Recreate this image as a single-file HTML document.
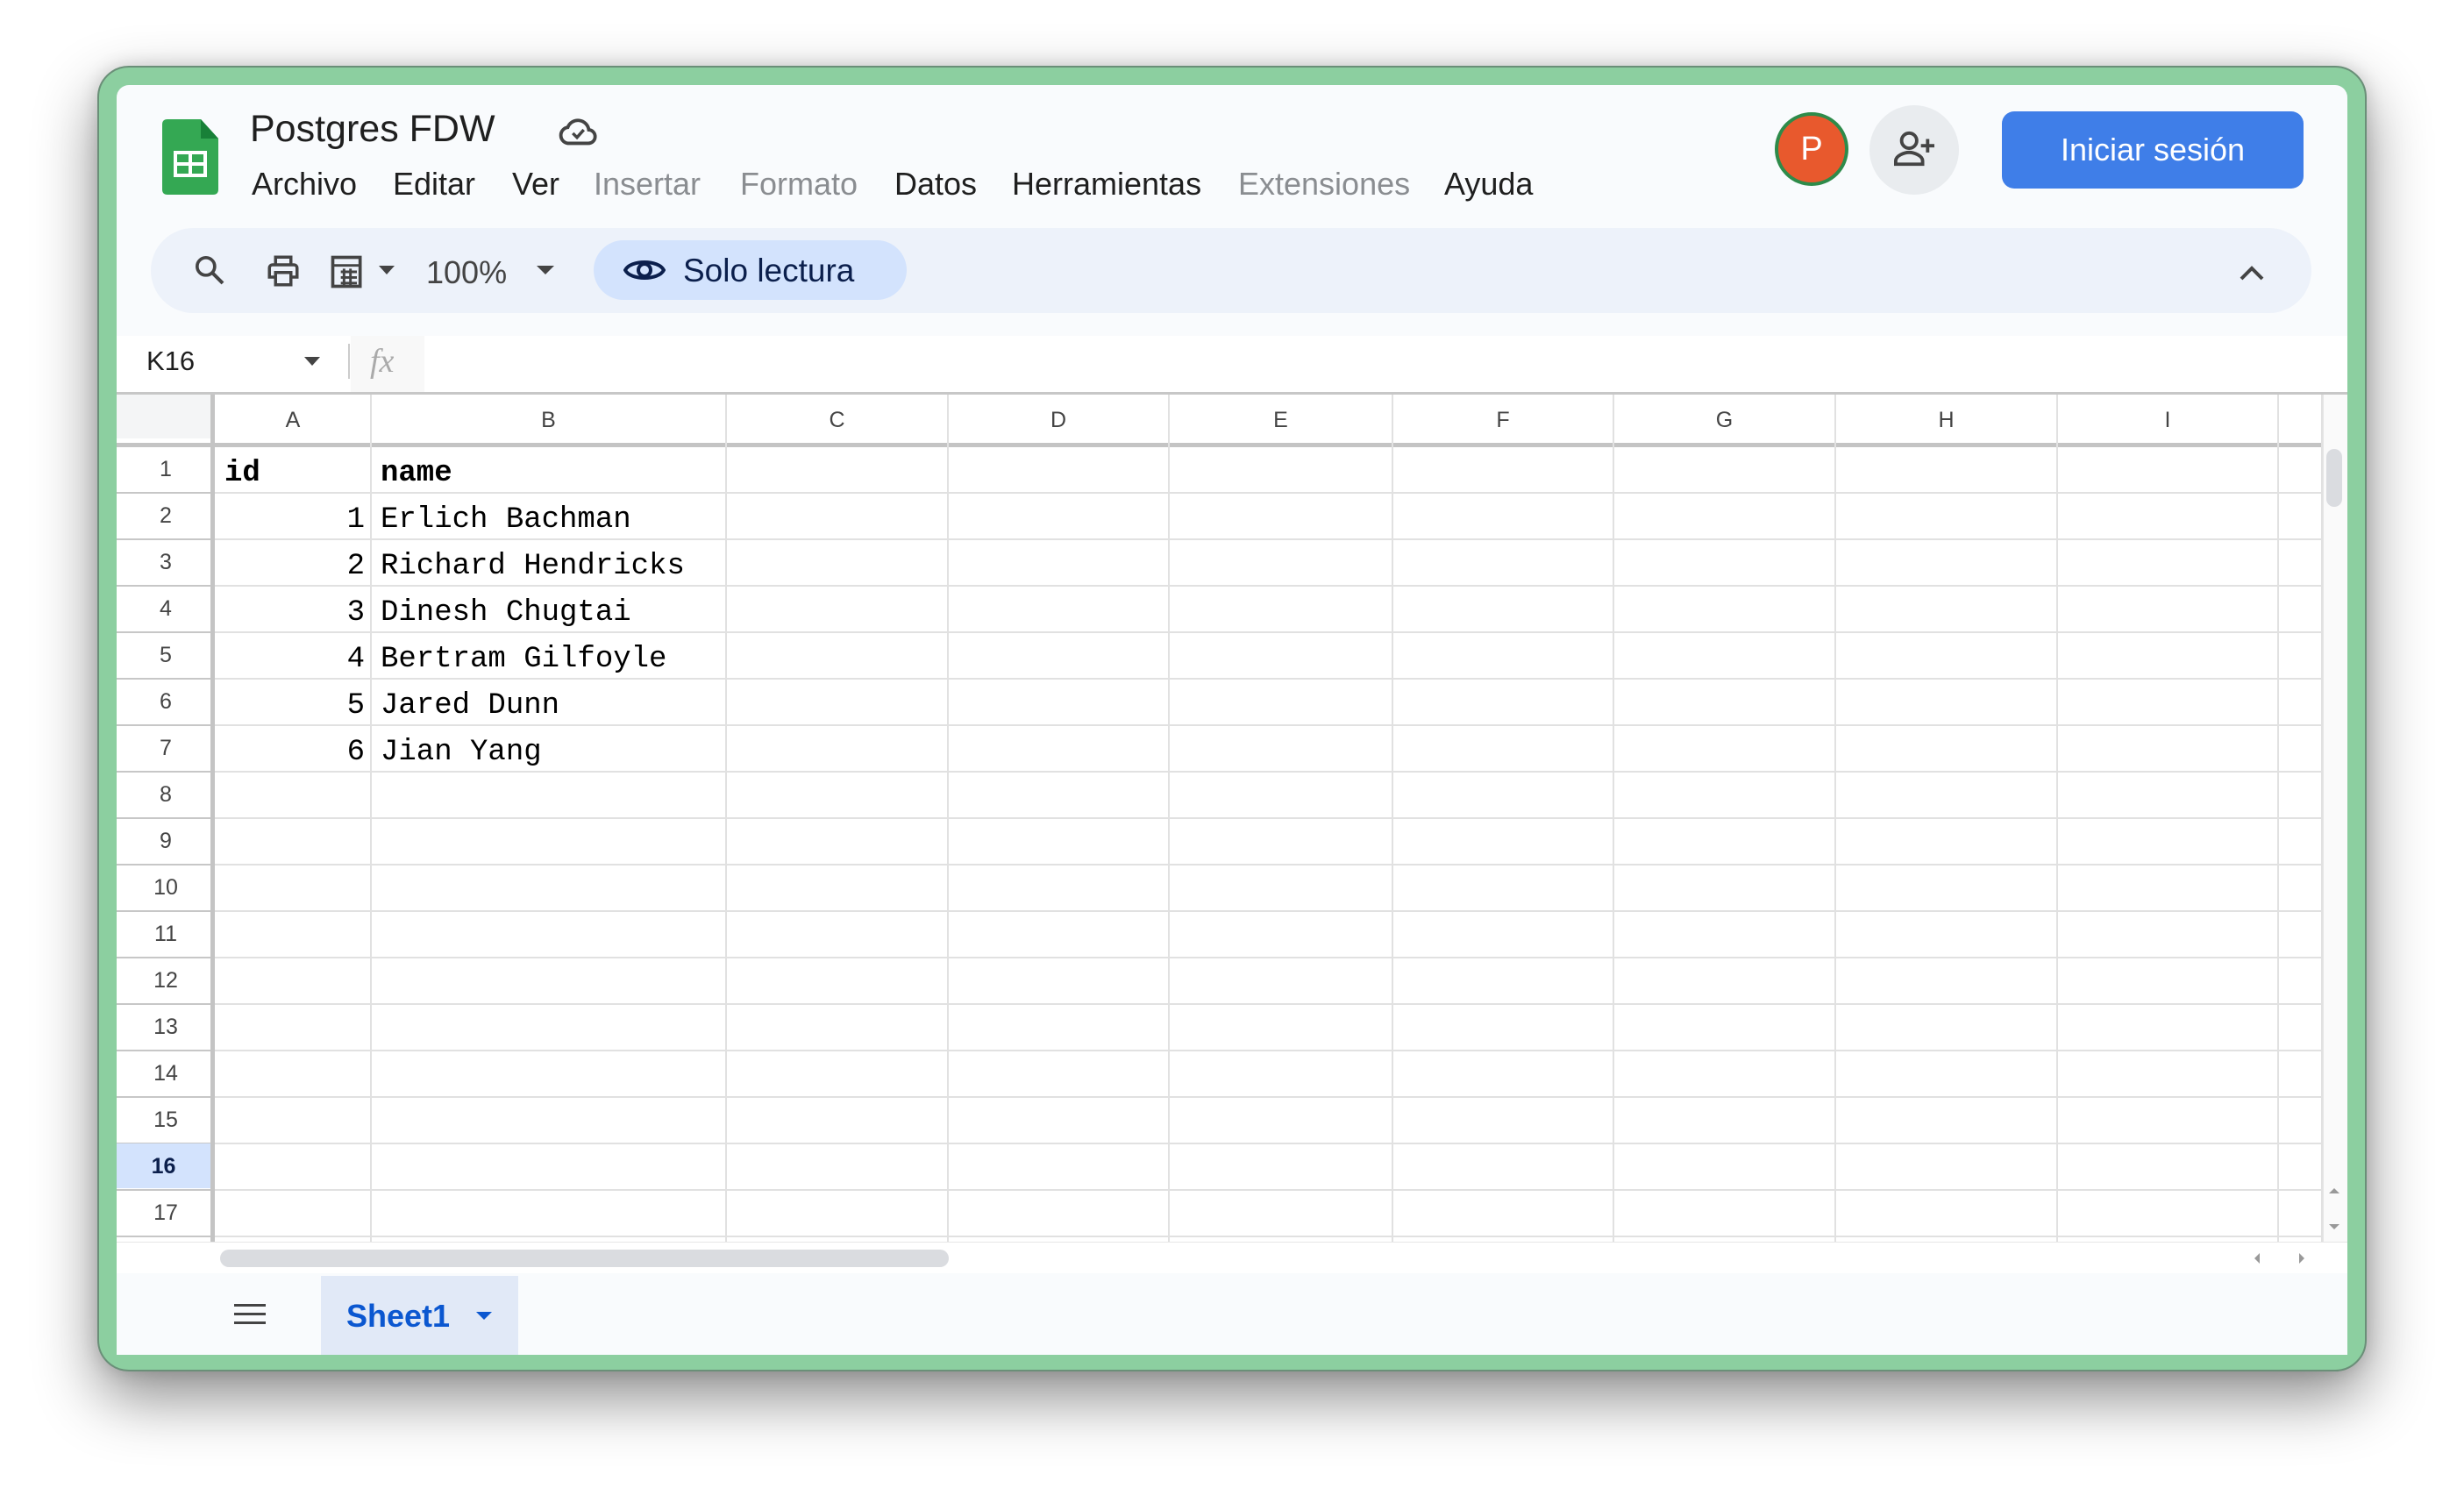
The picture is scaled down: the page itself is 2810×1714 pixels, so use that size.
<!DOCTYPE html>
<html><head><meta charset="utf-8"><style>
*{margin:0;padding:0;box-sizing:border-box}
body{width:2810px;height:1714px;background:#fff;position:relative;overflow:hidden;font-family:"Liberation Sans",sans-serif;color:#1f1f1f}
.abs{position:absolute}
#win{left:111px;top:75px;width:2588px;height:1489px;background:#8ccfa0;border-radius:36px;border:2px solid #6a8f78;box-shadow:0 30px 70px rgba(0,0,0,.45),0 0 20px rgba(0,0,0,.15)}
#panel{left:133px;top:97px;width:2544px;height:1448px;background:#f9fbfd;border-radius:14px 14px 0 0;overflow:hidden}
.menu{top:189px;font-size:36px;color:#1f1f1f}
.dim{color:#8a8d91}
.vl{position:absolute;top:450px;height:966px;width:2px;background:#e1e1e1}
.hd{position:absolute;top:450px;height:59px;line-height:59px;text-align:center;font-size:25px;color:#444}
.rn{position:absolute;left:133px;width:112px;text-align:center;font-size:25px;color:#444;height:53px;line-height:53px}
.c{position:absolute;font-family:"Liberation Mono",monospace;font-size:34px;height:53px;line-height:62px;color:#000}
</style></head><body>
<div id="win" class="abs"></div>
<div id="panel" class="abs">
</div>
<svg class="abs" style="left:185px;top:136px" width="64" height="86" viewBox="0 0 64 86">
<path d="M6 0H44L64 22V80Q64 86 58 86H6Q0 86 0 80V6Q0 0 6 0Z" fill="#34a853"/>
<path d="M44 0V22H64Z" fill="#188038"/>
<rect x="13" y="36" width="38" height="30" fill="#fff"/>
<rect x="17" y="40" width="13" height="9" fill="#34a853"/><rect x="34" y="40" width="13" height="9" fill="#34a853"/>
<rect x="17" y="53" width="13" height="9" fill="#34a853"/><rect x="34" y="53" width="13" height="9" fill="#34a853"/>
</svg>
<div class="abs" style="left:285px;top:123px;font-size:43px;color:#1f1f1f">Postgres FDW</div>
<svg class="abs" style="left:636px;top:130px" width="46" height="40" viewBox="0 0 24 20"><path d="M6 17H18A4 4 0 0 0 18.5 9 6.5 6.5 0 0 0 6 7.5 4.8 4.8 0 0 0 6 17Z" fill="none" stroke="#444" stroke-width="2"/><path d="M9 11l2.5 2.5L15.5 9" fill="none" stroke="#444" stroke-width="1.8"/></svg>
<div class="abs menu" style="left:287px">Archivo</div>
<div class="abs menu" style="left:448px">Editar</div>
<div class="abs menu" style="left:584px">Ver</div>
<div class="abs menu dim" style="left:677px">Insertar</div>
<div class="abs menu dim" style="left:844px">Formato</div>
<div class="abs menu" style="left:1020px">Datos</div>
<div class="abs menu" style="left:1154px">Herramientas</div>
<div class="abs menu dim" style="left:1412px">Extensiones</div>
<div class="abs menu" style="left:1647px">Ayuda</div>
<div class="abs" style="left:2024px;top:128px;width:84px;height:84px;border-radius:50%;background:#e8592d;border:4px solid #2e8b4a;color:#fff;font-size:38px;text-align:center;line-height:76px">P</div>
<div class="abs" style="left:2132px;top:120px;width:102px;height:102px;border-radius:50%;background:#e9ecef"></div>
<svg class="abs" style="left:2158px;top:147px" width="50" height="46" viewBox="0 0 26 24"><circle cx="10" cy="7" r="4.5" fill="none" stroke="#444" stroke-width="2"/><path d="M2 21v-2c0-3 5-5 8-5s8 2 8 5v2Z" fill="none" stroke="#444" stroke-width="2"/><path d="M21 6v8M17 10h8" stroke="#444" stroke-width="2"/></svg>
<div class="abs" style="left:2283px;top:127px;width:344px;height:88px;border-radius:14px;background:#3f7ee8;color:#fff;font-size:36px;text-align:center;line-height:88px;font-weight:500">Iniciar sesión</div>
<div class="abs" style="left:172px;top:260px;width:2464px;height:97px;border-radius:49px;background:#edf2fa"></div>
<svg class="abs" style="left:219px;top:288px" width="40" height="40" viewBox="0 0 24 24"><circle cx="9.5" cy="9.5" r="6" fill="none" stroke="#444" stroke-width="2.2"/><path d="M14 14l7 7" stroke="#444" stroke-width="2.4"/></svg>
<svg class="abs" style="left:302px;top:288px" width="42" height="42" viewBox="0 0 24 24"><path d="M7 8V3h10v5M5 8h14a2 2 0 0 1 2 2v6h-4M7 16H3v-6a2 2 0 0 1 2-2" fill="none" stroke="#444" stroke-width="2"/><rect x="7" y="13" width="10" height="8" fill="none" stroke="#444" stroke-width="2"/></svg>
<svg class="abs" style="left:374px;top:288px" width="44" height="44" viewBox="0 0 24 24"><rect x="3" y="3" width="17" height="18" fill="none" stroke="#444" stroke-width="2"/><path d="M3 8h17M8 12h10M8 15.5h10M8 19h10M10 10v11M14 10v11" stroke="#444" stroke-width="1.6"/></svg>
<div class="abs" style="left:432px;top:303px;border-left:9px solid transparent;border-right:9px solid transparent;border-top:10px solid #444"></div>
<div class="abs" style="left:486px;top:290px;font-size:36px;color:#444">100%</div>
<div class="abs" style="left:612px;top:303px;border-left:10px solid transparent;border-right:10px solid transparent;border-top:10px solid #444"></div>
<div class="abs" style="left:677px;top:274px;width:357px;height:68px;border-radius:34px;background:#d3e3fd"></div>
<svg class="abs" style="left:711px;top:292px" width="48" height="32" viewBox="0 0 24 16"><path d="M1 8C4 2 20 2 23 8 20 14 4 14 1 8Z" fill="none" stroke="#0b1f4c" stroke-width="2"/><circle cx="12" cy="8" r="3.5" fill="none" stroke="#0b1f4c" stroke-width="2"/></svg>
<div class="abs" style="left:779px;top:288px;font-size:37px;color:#0b1f4c">Solo lectura</div>
<svg class="abs" style="left:2552px;top:298px" width="32" height="24" viewBox="0 0 16 12"><path d="M2 10L8 4l6 6" fill="none" stroke="#444" stroke-width="2"/></svg>
<div class="abs" style="left:133px;top:383px;width:2544px;height:64px;background:#fff"></div>
<div class="abs" style="left:167px;top:394px;font-size:31px;color:#1f1f1f">K16</div>
<div class="abs" style="left:347px;top:407px;border-left:9px solid transparent;border-right:9px solid transparent;border-top:10px solid #444"></div>
<div class="abs" style="left:397px;top:392px;width:2px;height:40px;background:#ccc"></div>
<div class="abs" style="left:400px;top:383px;width:84px;height:64px;background:#f8f8f8"></div>
<div class="abs" style="left:422px;top:390px;font-family:'Liberation Serif',serif;font-style:italic;font-size:38px;color:#aaa">fx</div>
<div class="abs" style="left:133px;top:447px;width:2544px;height:969px;background:#fff"></div>
<div class="abs" style="left:133px;top:447px;width:2544px;height:3px;background:#c7c7c7"></div>
<div class="abs" style="left:133px;top:450px;width:107px;height:50px;background:#f4f5f6"></div>
<div class="abs" style="left:240px;top:450px;width:5px;height:966px;background:#c4c4c4"></div>
<div class="abs" style="left:133px;top:505px;width:2516px;height:5px;background:#c4c4c4"></div>
<div class="abs" style="left:245px;top:510px;width:2404px;height:906px;background:repeating-linear-gradient(to bottom,transparent 0 51px,#e1e1e1 51px 53px)"></div>
<div class="abs" style="left:133px;top:510px;width:107px;height:906px;background:repeating-linear-gradient(to bottom,transparent 0 51px,#c7c7c7 51px 53px)"></div>
<div class="vl" style="left:422px"></div><div class="vl" style="left:827px"></div><div class="vl" style="left:1080px"></div><div class="vl" style="left:1332px"></div><div class="vl" style="left:1587px"></div><div class="vl" style="left:1839px"></div><div class="vl" style="left:2092px"></div><div class="vl" style="left:2345px"></div><div class="vl" style="left:2597px"></div><div class="vl" style="left:2647px"></div>
<div class="hd" style="left:245px;width:178px">A</div><div class="hd" style="left:423px;width:405px">B</div><div class="hd" style="left:828px;width:253px">C</div><div class="hd" style="left:1081px;width:252px">D</div><div class="hd" style="left:1333px;width:255px">E</div><div class="hd" style="left:1588px;width:252px">F</div><div class="hd" style="left:1840px;width:253px">G</div><div class="hd" style="left:2093px;width:253px">H</div><div class="hd" style="left:2346px;width:252px">I</div>
<div class="rn" style="top:509px">1</div><div class="rn" style="top:562px">2</div><div class="rn" style="top:615px">3</div><div class="rn" style="top:668px">4</div><div class="rn" style="top:721px">5</div><div class="rn" style="top:774px">6</div><div class="rn" style="top:827px">7</div><div class="rn" style="top:880px">8</div><div class="rn" style="top:933px">9</div><div class="rn" style="top:986px">10</div><div class="rn" style="top:1039px">11</div><div class="rn" style="top:1092px">12</div><div class="rn" style="top:1145px">13</div><div class="rn" style="top:1198px">14</div><div class="rn" style="top:1251px">15</div>
<div class="rn" style="top:1304px;height:51px;width:107px;background:#d3e3fd;color:#0b1f4c;font-weight:bold">16</div>
<div class="rn" style="top:1357px">17</div>
<div class="c" style="left:256px;top:509px;font-weight:bold">id</div>
<div class="c" style="left:434px;top:509px;font-weight:bold">name</div>
<div class="c" style="left:380px;width:36px;text-align:right;top:562px">1</div><div class="c" style="left:434px;top:562px">Erlich Bachman</div>
<div class="c" style="left:380px;width:36px;text-align:right;top:615px">2</div><div class="c" style="left:434px;top:615px">Richard Hendricks</div>
<div class="c" style="left:380px;width:36px;text-align:right;top:668px">3</div><div class="c" style="left:434px;top:668px">Dinesh Chugtai</div>
<div class="c" style="left:380px;width:36px;text-align:right;top:721px">4</div><div class="c" style="left:434px;top:721px">Bertram Gilfoyle</div>
<div class="c" style="left:380px;width:36px;text-align:right;top:774px">5</div><div class="c" style="left:434px;top:774px">Jared Dunn</div>
<div class="c" style="left:380px;width:36px;text-align:right;top:827px">6</div><div class="c" style="left:434px;top:827px">Jian Yang</div>
<div class="abs" style="left:2649px;top:450px;width:28px;height:966px;background:#fafafa;border-left:1px solid #e6e6e6"></div>
<div class="abs" style="left:2653px;top:512px;width:18px;height:66px;border-radius:9px;background:#dadce0"></div>
<div class="abs" style="left:2656px;top:1355px;border-left:6px solid transparent;border-right:6px solid transparent;border-bottom:6px solid #999"></div>
<div class="abs" style="left:2656px;top:1396px;border-left:6px solid transparent;border-right:6px solid transparent;border-top:6px solid #999"></div>
<div class="abs" style="left:133px;top:1416px;width:2544px;height:36px;background:#fff;border-top:1px solid #e6e6e6"></div>
<div class="abs" style="left:251px;top:1425px;width:831px;height:20px;border-radius:10px;background:#dadce0"></div>
<div class="abs" style="left:2571px;top:1429px;border-top:6px solid transparent;border-bottom:6px solid transparent;border-right:6px solid #999"></div>
<div class="abs" style="left:2622px;top:1429px;border-top:6px solid transparent;border-bottom:6px solid transparent;border-left:6px solid #999"></div>
<div class="abs" style="left:133px;top:1452px;width:2544px;height:93px;background:#f9fbfd"></div>
<div class="abs" style="left:267px;top:1487px;width:36px;height:3px;background:#444;box-shadow:0 10px 0 #444,0 20px 0 #444"></div>
<div class="abs" style="left:366px;top:1455px;width:225px;height:90px;background:#e1e9f7"></div>
<div class="abs" style="left:395px;top:1480px;font-size:36px;font-weight:bold;color:#0b57d0">Sheet1</div>
<div class="abs" style="left:543px;top:1496px;border-left:9px solid transparent;border-right:9px solid transparent;border-top:9px solid #0b57d0"></div>
</body></html>
